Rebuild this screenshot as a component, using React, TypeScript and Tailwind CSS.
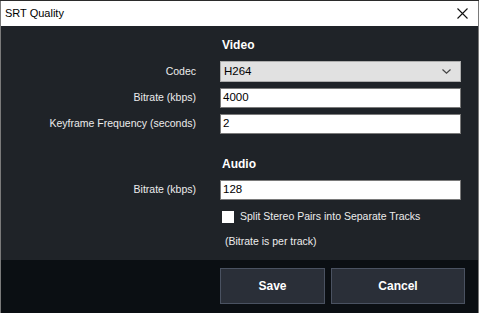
export default function App() {
  return (
    <div className="w-[479px] h-[313px] bg-[#2b2b2b] pt-px font-['Liberation_Sans',Arial,sans-serif] text-[10.5px] select-none">
      <div className="h-[312px] flex flex-col border-x border-[#7a7a7a]">
        {/* Title bar */}
        <div className="h-[25px] bg-white flex items-center justify-between pl-[4px] pr-[9px] shrink-0">
          <span className="text-black text-[11px] leading-none">SRT Quality</span>
          <svg width="11" height="11" viewBox="0 0 11 11" className="mr-px">
            <path d="M0.5 0.5 L10.5 10.5 M10.5 0.5 L0.5 10.5" stroke="#111" strokeWidth="1.1" fill="none" />
          </svg>
        </div>

        {/* Body */}
        <div className="h-[234px] bg-[#1f2328] text-[#ececec] pt-[11px] shrink-0">
          <div className="grid grid-cols-[195px_241px] gap-x-[24px] items-center">
            <div />
            <div className="pl-[2px] h-[16px] leading-[16px] font-bold text-[12px] text-white">Video</div>

            <div className="col-span-2 h-[8px]" />

            <div className="text-right">Codec</div>
            <div className="h-[21px] bg-[#e1e1e1] border border-[#adadad] flex items-center justify-between pl-[3px] pr-[9px] text-black text-[11.5px]">
              <span>H264</span>
              <svg width="9" height="5" viewBox="0 0 9 5">
                <path d="M0.5 0.5 L4.5 4.2 L8.5 0.5" stroke="#444" strokeWidth="1.2" fill="none" />
              </svg>
            </div>

            <div className="col-span-2 h-[6px]" />

            <div className="text-right">Bitrate (kbps)</div>
            <div className="h-[20px] bg-white border border-[#7a7a7a] flex items-center pl-[2px] text-black text-[11.5px]">4000</div>

            <div className="col-span-2 h-[6px]" />

            <div className="text-right">Keyframe Frequency (seconds)</div>
            <div className="h-[20px] bg-white border border-[#7a7a7a] flex items-center pl-[2px] text-black text-[11.5px]">2</div>

            <div className="col-span-2 h-[22px]" />

            <div />
            <div className="pl-[2px] h-[16px] leading-[16px] font-bold text-[12px] text-white">Audio</div>

            <div className="col-span-2 h-[8px]" />

            <div className="text-right">Bitrate (kbps)</div>
            <div className="h-[20px] bg-white border border-[#7a7a7a] flex items-center pl-[2px] text-black text-[11.5px]">128</div>

            <div className="col-span-2 h-[10px]" />

            <div />
            <div className="flex items-center h-[14px] pl-[2px]">
              <span className="w-[12px] h-[12px] bg-white shrink-0" />
              <span className="ml-[6px]">Split Stereo Pairs into Separate Tracks</span>
            </div>

            <div className="col-span-2 h-[9px]" />

            <div />
            <div className="pl-[5px] h-[16px] leading-[16px]">(Bitrate is per track)</div>
          </div>
        </div>

        {/* Footer */}
        <div className="flex-1 bg-[#0b0f13] flex justify-end items-start pt-[8px] pr-[13px] gap-[6px]">
          <button className="w-[105px] h-[36px] bg-[#2a2f38] border border-[#4a5261] text-white font-bold text-[12px]">
            Save
          </button>
          <button className="w-[134px] h-[36px] bg-[#2a2f38] border border-[#4a5261] text-white font-bold text-[12px]">
            Cancel
          </button>
        </div>
      </div>
    </div>
  );
}
